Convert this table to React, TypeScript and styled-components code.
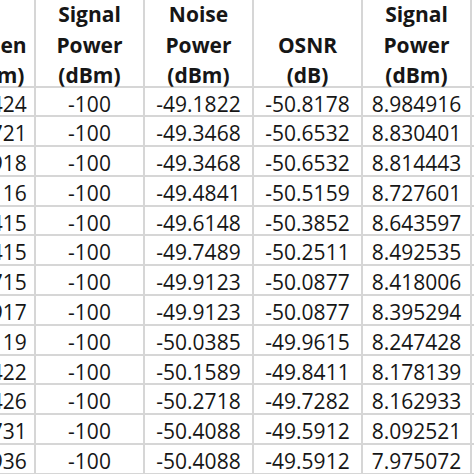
import React from 'react';
import styled, { createGlobalStyle } from 'styled-components';

const GlobalStyle = createGlobalStyle`
  html, body {
    margin: 0;
    padding: 0;
    background: #ffffff;
  }
  body {
    font-family: 'Open Sans', 'Liberation Sans', sans-serif;
  }
`;

const Viewport = styled.div`
  width: 474px;
  height: 474px;
  overflow: hidden;
  background: #ffffff;
`;

const Sheet = styled.table`
  border-collapse: collapse;
  table-layout: fixed;
  width: 654px;
  margin-left: -75px;
  margin-top: -1px;
  color: #161616;
  font-size: 21px;
`;

const Col = styled.col`
  width: 109px;
`;

const HeadCell = styled.th`
  padding: 0;
  vertical-align: bottom;
  font-weight: 700;
  text-align: center;
  white-space: nowrap;
  border: 2px solid #d6d6d6;
  border-top: none;
`;

const HeadStack = styled.div`
  display: flex;
  flex-direction: column;
  justify-content: flex-end;
  margin-bottom: -5px;
  line-height: 30.5px;
`;

const Cell = styled.td<{ $lead?: boolean }>`
  height: 21.8px;
  padding: 6px 0 0 ${(p) => (p.$lead ? '3px' : '0')};
  line-height: 21.8px;
  text-align: center;
  white-space: nowrap;
  border: 2px solid #d6d6d6;
`;

const headers: string[][] = [
  ['Between', '(in dBm)'],
  ['Signal', 'Power', '(dBm)'],
  ['Noise', 'Power', '(dBm)'],
  ['OSNR', '(dB)'],
  ['Signal', 'Power', '(dBm)'],
  [],
];

const rows: string[][] = [
  ['9.151424', '-100', '-49.1822', '-50.8178', '8.984916'],
  ['9.030721', '-100', '-49.3468', '-50.6532', '8.830401'],
  ['9.003918', '-100', '-49.3468', '-50.6532', '8.814443'],
  ['8.929116', '-100', '-49.4841', '-50.5159', '8.727601'],
  ['8.851415', '-100', '-49.6148', '-50.3852', '8.643597'],
  ['8.716415', '-100', '-49.7489', '-50.2511', '8.492535'],
  ['8.614715', '-100', '-49.9123', '-50.0877', '8.418006'],
  ['8.603917', '-100', '-49.9123', '-50.0877', '8.395294'],
  ['8.478119', '-100', '-50.0385', '-49.9615', '8.247428'],
  ['8.398422', '-100', '-50.1589', '-49.8411', '8.178139'],
  ['8.371426', '-100', '-50.2718', '-49.7282', '8.162933'],
  ['8.301731', '-100', '-50.4088', '-49.5912', '8.092521'],
  ['8.183936', '-100', '-50.4088', '-49.5912', '7.975072'],
];

const App: React.FC = () => {
  return (
    <>
      <GlobalStyle />
      <Viewport>
        <Sheet>
          <colgroup>
            {headers.map((_, i) => (
              <Col key={i} />
            ))}
          </colgroup>
          <thead>
            <tr>
              {headers.map((lines, i) => (
                <HeadCell key={i}>
                  <HeadStack>
                    {lines.map((line) => (
                      <div key={line}>{line}</div>
                    ))}
                  </HeadStack>
                </HeadCell>
              ))}
            </tr>
          </thead>
          <tbody>
            {rows.map((row, r) => (
              <tr key={r}>
                {row.map((value, c) => (
                  <Cell key={c} $lead={c === 0}>
                    {value}
                  </Cell>
                ))}
                <Cell />
              </tr>
            ))}
          </tbody>
        </Sheet>
      </Viewport>
    </>
  );
};

export default App;
